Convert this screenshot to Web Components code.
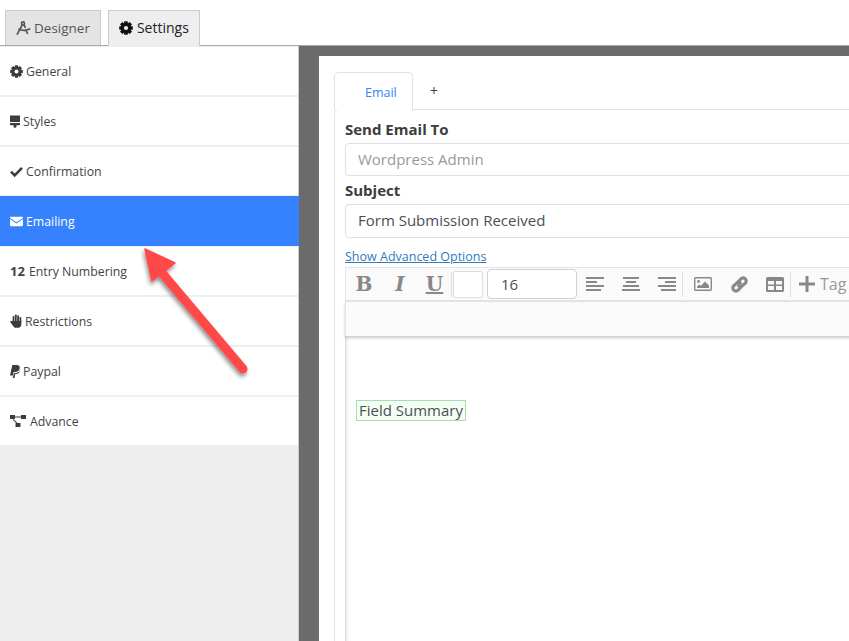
<!DOCTYPE html>
<html><head><meta charset="utf-8"><style>
html,body{margin:0;height:641px;width:849px;overflow:hidden;background:#fff;font-family:"Open Sans","Noto Sans",sans-serif;color:#444}
</style></head><body>
<app-shell></app-shell>
<script>
const gear=(c='currentColor',s=13)=>`<svg width="${s}" height="${s}" viewBox="0 0 14 14"><g fill="${c}">${[0,45,90,135].map(a=>`<rect x="5.2" y="0.2" width="3.6" height="13.6" rx=".5" transform="rotate(${a} 7 7)"/>`).join('')}<circle cx="7" cy="7" r="5.2"/></g><circle cx="7" cy="7" r="2.1" fill="var(--hole,#fff)"/></svg>`;
const icons={
gear:gear(),
brush:`<svg width="10" height="13" viewBox="0 0 10 13"><path fill="currentColor" d="M0 .5h10V7H0zM0 8h10v1.300c0 .6-.4 1-1 1H6.500v1a1.500 1.500 0 0 1-3 0v-1H1c-.6 0-1-.4-1-1z"/></svg>`,
check:`<svg width="13" height="13" viewBox="0 0 13 13"><path fill="none" stroke="currentColor" stroke-width="2.600" d="M1 6.600l3.700 3.700L12 2.800"/></svg>`,
mail:`<svg width="13" height="13" viewBox="0 0 14 14"><path fill="#fff" d="M1.200 2h11.600c.7 0 1.200.5 1.200 1.100L7 7.800 0 3.100C0 2.500.5 2 1.200 2zM0 4.400l7 4.700 7-4.700v6.400c0 .7-.5 1.200-1.200 1.200H1.200C.5 12 0 11.500 0 10.800z"/></svg>`,
hand:`<svg width="12" height="14" viewBox="0 0 12 14"><g fill="currentColor"><rect x="2.600" y="2" width="1.800" height="7" rx=".9"/><rect x="4.900" y=".4" width="1.800" height="8" rx=".9"/><rect x="7.200" y="1.200" width="1.800" height="8" rx=".9"/><rect x="9.500" y="3" width="1.800" height="6" rx=".9"/><path d="M2.600 7h8.700v3.500c0 1.800-1.200 3.200-3 3.200H6c-1.200 0-2-.5-2.700-1.500L.4 8.300c-.5-.8.500-1.700 1.300-1z"/></g></svg>`,
paypal:`<svg width="10" height="13" viewBox="0 0 10 13"><path fill="currentColor" d="M2.300 0h4.200C8.800 0 10 1.200 9.700 3.200 9.300 5.700 7.600 7 5.100 7H3.700L2.900 10.600H0z"/><path fill="currentColor" d="M3 11.400L4.300 7.900h1.300c2.200 0 3.700-1.100 4.200-3 .3 2.500-1.200 4.200-3.600 4.200H5.200L4.500 13H2.600z"/></svg>`,
sitemap:`<svg width="16" height="14" viewBox="0 0 16 14"><g fill="currentColor"><rect x="0" y="1" width="5" height="4"/><rect x="11" y="1" width="5" height="4"/><rect x="5.500" y="9" width="5" height="4"/><rect x="5" y="2.500" width="6" height="1"/><path d="M3.500 5l4 4-.7.700-4-4z"/></g></svg>`,
compass:`<svg width="15" height="14" viewBox="0 0 15 14"><g fill="none" stroke="currentColor" stroke-width="1.700"><circle cx="7" cy="2.400" r="1.500"/><path d="M6.200 4L1 13.600M8 4l1.500 2.800"/><path d="M2.500 7.600c3 2 8 2 11.800 .2M9.500 8.500l2.200 4.500"/></g></svg>`,
gearB:`<span style="--hole:#eee;display:inline-flex">${gear('#111',14)}</span>`
};
const ed={
left:`<svg width="18" height="16" viewBox="0 0 18 16"><path fill="#888" d="M0 1h18v2H0zM0 5h11v2H0zM0 9h18v2H0zM0 13h15v2H0z"/></svg>`,
center:`<svg width="18" height="16" viewBox="0 0 18 16"><path fill="#888" d="M1 1h16v2H1zM4 5h10v2H4zM1 9h16v2H1zM0 13h18v2H0z"/></svg>`,
right:`<svg width="18" height="16" viewBox="0 0 18 16"><path fill="#888" d="M0 1h18v2H0zM7 5h11v2H7zM0 9h18v2H0zM3 13h15v2H3z"/></svg>`,
image:`<svg width="18" height="14" viewBox="0 0 18 14"><rect x=".7" y=".7" width="16.600" height="12.600" rx="1" fill="none" stroke="#888" stroke-width="1.400"/><circle cx="4.500" cy="4.500" r="1.400" fill="#888"/><path fill="#888" d="M3 11v-1.500l2.500-2 1.500 1.300 4-4.300 4 4V11z"/></svg>`,
link:`<svg width="19" height="19" viewBox="0 0 18 18"><g fill="none" stroke="#888" stroke-width="2.900" stroke-linecap="round"><path d="M7.800 6.300l1.200-1.200 2-2a3 3 0 0 1 4 4l-3 3a3 3 0 0 1-4 0"/><path d="M10.200 11.700L9 12.900l-2 2a3 3 0 0 1-4-4l3-3a3 3 0 0 1 4 0"/></g></svg>`,
table:`<svg width="18" height="15" viewBox="0 0 18 15"><path fill-rule="evenodd" fill="#888" d="M1.500 0h15A1.500 1.500 0 0 1 18 1.500v12a1.500 1.500 0 0 1-1.500 1.500h-15A1.500 1.500 0 0 1 0 13.500v-12A1.500 1.500 0 0 1 1.500 0zM2 4v3.500h6V4zm8 0v3.500h6V4zM2 9v4h6V9zm8 0v4h6V9z"/></svg>`,
plus:`<svg width="16" height="16" viewBox="0 0 16 16"><path fill="#888" d="M6.500 0h3v6.500H16v3H9.500V16h-3V9.500H0v-3h6.500z"/></svg>`
};
function def(name,html,init){customElements.define(name,class extends HTMLElement{constructor(){super();this.attachShadow({mode:'open'}).innerHTML=typeof html==='function'?html(this):html}connectedCallback(){if(init&&!this._i){this._i=1;init(this)}}})}

def('top-tab',()=>`<style>
:host{display:flex;align-items:center;gap:3px;box-sizing:border-box;height:35px;padding:0 10px 1px;background:#e4e4e4;border:1px solid #ccc;border-bottom:none;font-size:13.500px;color:#555}
:host([active]){background:#eee;color:#222;height:36px;margin-bottom:-1px;position:relative;font-size:14px;padding:0 10px 2px;gap:4px}
span{display:inline-flex}
</style><span id="i"></span><slot></slot>`,el=>{el.shadowRoot.getElementById('i').innerHTML=icons[el.getAttribute('icon')]});

def('side-item',()=>`<style>
:host{display:flex;align-items:center;gap:var(--g,3px);box-sizing:border-box;height:50px;padding:0 10px;background:#fff;border-bottom:2px solid #eef0f0;font-size:12.300px;color:#444}
:host([active]){background:#3681fd;color:#fff;border-bottom:none;margin:-1px -1px 1px 0;position:relative}
span{display:inline-flex;color:#3c3c3c}
:host([active]) span{color:#fff}
b{font-size:13px;color:#444;margin-right:1px}
</style><span id="i"></span><slot></slot>`,el=>{const n=el.getAttribute('icon');el.shadowRoot.getElementById('i').innerHTML=n==='12'?'<b>12</b>':icons[n]});

def('text-field',`<style>
:host{display:flex;align-items:center;box-sizing:border-box;height:var(--h,33px);width:600px;padding:0 0 2px 12px;border:1px solid #dfe0e6;border-radius:4px;font-size:15px;color:#495057;background:#fff}
:host([placeholder]){color:#999}
</style><slot></slot>`);

def('tool-btn',`<style>
:host{display:flex;align-items:center;justify-content:center;width:36px;height:32px;flex:none;color:#888}
</style><slot></slot>`);

def('rich-editor',()=>`<style>
:host{display:block;width:600px;height:400px}
.bar{display:flex;align-items:center;height:35px;box-sizing:border-box;background:#fafafa;border:1px solid #e4e4e4;border-width:1px 0 2px 1px;padding-left:0}
.row2{height:34px;background:#fbfbfb;box-shadow:0 2px 3px rgba(0,0,0,.2);position:relative;border-left:1px solid #e4e4e4}
.body{height:330px;box-sizing:border-box;padding-top:64px;padding-left:10px;border-left:1px solid #ddd;box-shadow:inset 2px 0 2px rgba(0,0,0,.06)}
.sep{width:1px;height:25px;background:#ddd;flex:none}
.sw{width:28px;height:25px;border:1px solid #ddd;border-radius:2px;background:#fff;margin-left:1px;margin-right:4px;flex:none}
.num{box-sizing:border-box;width:90px;height:30px;border:1px solid #cfd0d8;border-radius:4px;background:#fff;font-size:15px;color:#495057;padding-left:13px;display:flex;align-items:center;flex:none}
.tag{font-size:16px;color:#999;margin-left:5px}
.chip{display:inline-block;box-sizing:border-box;height:21px;line-height:18px;padding:0 2px;background:#f2fff2;border:1px solid #a9dcb4;font-size:15px;color:#495057;position:relative;top:-1px}
.g{font:bold 20px "DejaVu Serif",serif;color:#888}
</style>
<div class="bar">
<tool-btn><span class="g">B</span></tool-btn>
<tool-btn><span class="g" style="font-style:italic">I</span></tool-btn>
<tool-btn style="width:33px"><span class="g" style="text-decoration:underline">U</span></tool-btn>
<div class="sep"></div><div class="sw"></div><div class="num">16</div>
<tool-btn>${ed.left}</tool-btn><tool-btn>${ed.center}</tool-btn><tool-btn style="margin-right:-3px">${ed.right}</tool-btn>
<div class="sep"></div>
<tool-btn style="margin-left:2px">${ed.image}</tool-btn><tool-btn>${ed.link}</tool-btn><tool-btn style="margin-right:-3px">${ed.table}</tool-btn>
<div class="sep"></div>
<tool-btn style="width:auto;margin-left:8px">${ed.plus}</tool-btn><span class="tag">Tag</span>
</div>
<div class="row2"></div>
<div class="body"><span class="chip">Field Summary</span></div>`);

def('arrow-mark',`<style>:host{display:block;position:absolute;left:130px;top:235px;width:130px;height:150px;pointer-events:none}svg{display:block;overflow:visible}</style>
<svg width="130" height="150" viewBox="0 0 130 150"><defs><filter id="s" x="-30%" y="-30%" width="160%" height="160%"><feDropShadow dx="-1" dy="3" stdDeviation="2" flood-color="#000" flood-opacity=".45"/></filter></defs>
<g filter="url(#s)"><path d="M113 134L32 38" fill="none" stroke="#ff4848" stroke-width="9" stroke-linecap="round"/><path d="M15 14L45 28 22 46z" fill="#ff4848" stroke="#ff4848" stroke-width="1.500" stroke-linejoin="round"/></g></svg>`);

def('app-shell',()=>`<style>
:host{display:flex;flex-direction:column;height:641px;width:849px;position:relative;overflow:hidden}
.tabs{display:flex;align-items:flex-end;gap:7px;height:46px;padding-left:5px;box-sizing:border-box;border-bottom:1px solid #aaa;flex:none}
.main{display:flex;flex:1;min-height:0}
.side{width:299px;flex:none;background:#eee;border-right:1px solid #ccc;box-sizing:border-box;padding-top:1px}
.stage{flex:1;background:#6b6b6b;padding:10px 0 0 20px;min-width:0;overflow:hidden}
.panel{background:#fff;height:100%;padding:16px 0 0 15px;box-sizing:border-box;width:700px}
.ptabs{display:flex;align-items:flex-start;height:38px;position:relative;font-size:12.500px}
.ptab{box-sizing:border-box;width:79px;height:38px;border:1px solid #dee2e6;border-bottom:none;border-radius:5px 5px 0 0;background:#fff;color:#3681fd;padding:11px 0 0 30px;position:relative;z-index:1}
.plus{padding:9px 0 0 17px;color:#444;font-size:14px}
.box{border:1px solid #dee2e6;border-width:1px 0 0 1px;border-top-left-radius:5px;padding:9px 0 0 10px;margin-top:-1px;height:600px}
label{display:block;font-weight:700;font-size:15px;color:#3c3c3c;line-height:20px}
.l1{margin-bottom:4px}
.l2{margin:4px 0 4px}
a{display:block;margin:10px 0 2px;font-size:12.500px;line-height:17px;color:#337ab7;text-decoration:underline}
</style>
<div class="tabs"><top-tab icon="compass">Designer</top-tab><top-tab icon="gearB" active>Settings</top-tab></div>
<div class="main">
<div class="side">
<side-item icon="gear">General</side-item>
<side-item icon="brush">Styles</side-item>
<side-item icon="check">Confirmation</side-item>
<side-item icon="mail" active>Emailing</side-item>
<side-item icon="12">Entry Numbering</side-item>
<side-item icon="hand">Restrictions</side-item>
<side-item icon="paypal">Paypal</side-item>
<side-item icon="sitemap" style="--g:4px">Advance</side-item>
</div>
<div class="stage"><div class="panel">
<div class="ptabs"><div class="ptab">Email</div><div class="plus">+</div></div>
<div class="box">
<label class="l1">Send Email To</label>
<text-field placeholder>Wordpress Admin</text-field>
<label class="l2">Subject</label>
<text-field style="--h:34px">Form Submission Received</text-field>
<a>Show Advanced Options</a>
<rich-editor></rich-editor>
</div>
</div></div>
</div>
<arrow-mark></arrow-mark>`);
</script>
</body></html>
